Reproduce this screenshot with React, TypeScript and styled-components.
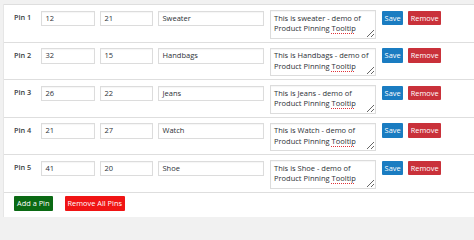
import React from "react";
import styled, { createGlobalStyle } from "styled-components";

const Global = createGlobalStyle`
  html, body { margin: 0; padding: 0; background: #f1f1f1; }
  body { font-family: "Open Sans", "Liberation Sans", sans-serif; }
`;

const Panel = styled.div`
  margin: 4px 0 0 3px;
  background: #ffffff;
  border-left: 1px solid #e6e6e6;
  min-height: 213px;
  box-sizing: border-box;
`;

const Row = styled.div`
  display: flex;
  align-items: flex-start;
  height: 37.6px;
  box-sizing: border-box;
  border-top: 1px solid #dedede;
  padding-top: 5.5px;
`;

const Label = styled.div`
  width: 27px;
  padding-left: 10px;
  padding-top: 1.5px;
  font-size: 7.3px;
  line-height: 10px;
  font-weight: 600;
  color: #3a3e43;
  flex: none;
`;

const Field = styled.div<{ $w: number; $gap: number }>`
  width: ${(p) => p.$w}px;
  margin-right: ${(p) => p.$gap}px;
  height: 15.5px;
  box-sizing: border-box;
  border: 1px solid #dcdcdc;
  box-shadow: inset 0 1px 1px rgba(0, 0, 0, 0.04);
  font-size: 7.5px;
  line-height: 13.5px;
  padding-left: 3.5px;
  color: #2c3136;
  flex: none;
`;

const Area = styled.div`
  width: 106px;
  height: 28.5px;
  margin-top: -0.5px;
  margin-right: 6px;
  box-sizing: border-box;
  border: 1px solid #dcdcdc;
  box-shadow: inset 0 1px 1px rgba(0, 0, 0, 0.04);
  padding: 1.5px 3px 0 3px;
  font-size: 7.5px;
  line-height: 10.6px;
  color: #2c3136;
  resize: both;
  overflow: hidden;
  flex: none;
`;

const Spell = styled.span`
  text-decoration: underline dotted #e0333a;
  text-decoration-thickness: 1px;
  text-underline-offset: 1.5px;
`;

const Btn = styled.button<{ $bg: string; $gap?: number }>`
  flex: none;
  margin: 0 ${(p) => p.$gap ?? 0}px 0 0;
  height: 14.5px;
  padding: 0 2.6px;
  border: none;
  border-radius: 1px;
  background: ${(p) => p.$bg};
  color: #ffffff;
  font-family: "Open Sans", "Liberation Sans", sans-serif;
  font-size: 7.4px;
  line-height: 14.5px;
  cursor: pointer;
`;

const Footer = styled.div`
  display: flex;
  align-items: flex-start;
  gap: 12px;
  border-top: 1px solid #dedede;
  padding: 3px 0 0 10px;
`;

const FootBtn = styled(Btn)`
  height: 15px;
  line-height: 15px;
  padding: 0 3px;
`;

const pins = [
  { x: "12", y: "21", name: "Sweater", desc: "sweater" },
  { x: "32", y: "15", name: "Handbags", desc: "Handbags" },
  { x: "26", y: "22", name: "Jeans", desc: "Jeans" },
  { x: "21", y: "27", name: "Watch", desc: "Watch" },
  { x: "41", y: "20", name: "Shoe", desc: "Shoe" },
];

export default function App() {
  return (
    <>
      <Global />
      <Panel>
        {pins.map((p, i) => (
          <Row key={i}>
            <Label>Pin {i + 1}</Label>
            <Field $w={54} $gap={5}>{p.x}</Field>
            <Field $w={53} $gap={5}>{p.y}</Field>
            <Field $w={106} $gap={6}>{p.name}</Field>
            <Area>
              This is {p.desc} - demo of Product Pinning <Spell>Tooltip</Spell>
            </Area>
            <Btn $bg="#1a7cc1" $gap={5}>Save</Btn>
            <Btn $bg="#c9313a">Remove</Btn>
          </Row>
        ))}
        <Footer>
          <FootBtn $bg="#0b6a14">Add a Pin</FootBtn>
          <FootBtn $bg="#f01414">Remove All Pins</FootBtn>
        </Footer>
      </Panel>
    </>
  );
}
